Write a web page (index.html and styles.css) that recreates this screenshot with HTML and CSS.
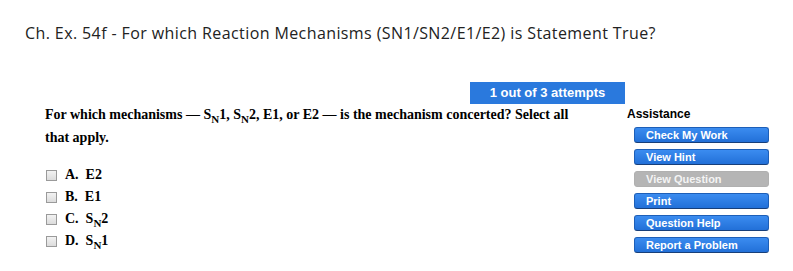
FILE: index.html
```html
<!DOCTYPE html>
<html>
<head>
<meta charset="utf-8">
<link rel="stylesheet" href="styles.css">
</head>
<body>
<h1 class="title">Ch. Ex. 54f - For which Reaction Mechanisms (SN1/SN2/E1/E2) is Statement True?</h1>
<div class="main">
  <div class="question">
    <div class="attempts-row"><span class="attempts">1 out of 3 attempts</span></div>
    <p class="prompt">For which mechanisms — S<sub>N</sub>1, S<sub>N</sub>2, E1, or E2 — is the mechanism concerted? Select all that apply.</p>
    <ul class="options">
      <li><span class="box"></span><span class="label">A.&nbsp; E2</span></li>
      <li><span class="box"></span><span class="label">B.&nbsp; E1</span></li>
      <li><span class="box"></span><span class="label">C.&nbsp; S<sub>N</sub>2</span></li>
      <li><span class="box"></span><span class="label">D.&nbsp; S<sub>N</sub>1</span></li>
    </ul>
  </div>
  <aside class="assist">
    <h2 class="assist-title">Assistance</h2>
    <div class="btn">Check My Work</div>
    <div class="btn">View Hint</div>
    <div class="btn disabled">View Question</div>
    <div class="btn">Print</div>
    <div class="btn">Question Help</div>
    <div class="btn">Report a Problem</div>
  </aside>
</div>
</body>
</html>
```
FILE: styles.css
```css
html, body {
  margin: 0;
  padding: 0;
  background: #fff;
}
body {
  width: 793px;
  height: 271px;
  overflow: hidden;
}
.title {
  margin: 0;
  padding: 24px 0 0 25px;
  font-family: "Open Sans", "Liberation Sans", sans-serif;
  font-weight: 400;
  font-size: 16px;
  line-height: 18px;
  letter-spacing: 0.4px;
  color: #222;
  height: 58px;
  box-sizing: border-box;
}
.main {
  display: flex;
  align-items: flex-start;
}
.question {
  width: 580px;
  padding-left: 45px;
}
.attempts-row {
  display: flex;
  justify-content: flex-end;
  margin-top: 24px;
}
.attempts {
  display: block;
  width: 155px;
  height: 22px;
  line-height: 22px;
  background: #2a79dd;
  color: #fff;
  font-family: "Liberation Sans", Arial, sans-serif;
  font-weight: 700;
  font-size: 13px;
  text-align: center;
}
.prompt {
  margin: -1px 0 0 0;
  width: 540px;
  font-family: "Liberation Serif", "Times New Roman", serif;
  font-weight: 700;
  font-size: 14px;
  line-height: 23px;
  color: #000;
}
sub {
  font-size: 11px;
  vertical-align: -4px;
  line-height: 0;
}
.options {
  list-style: none;
  margin: 15px 0 0 1px;
  padding: 0;
}
.options li {
  display: flex;
  align-items: center;
  height: 22px;
  font-family: "Liberation Serif", "Times New Roman", serif;
  font-weight: 700;
  font-size: 14px;
  color: #000;
}
.box {
  width: 9px;
  height: 9px;
  border: 1px solid #9a9a9a;
  background: linear-gradient(#f2f2f2, #dcdcdc);
  margin-right: 8px;
  flex: none;
}
.assist {
  margin-left: 2px;
  margin-top: 49px;
  width: 142px;
}
.assist-title {
  margin: 0 0 6px 0;
  font-family: "Liberation Sans", Arial, sans-serif;
  font-weight: 700;
  font-size: 12px;
  line-height: 14px;
  color: #000;
}
.btn {
  box-sizing: border-box;
  width: 135px;
  height: 16px;
  margin: 0 0 6px 7px;
  padding-left: 11px;
  border-radius: 3px;
  background: linear-gradient(#3b8cf0, #2270d8);
  border: 1px solid #1d5fb8;
  border-bottom-color: #173f7a;
  color: #fff;
  font-family: "Liberation Sans", Arial, sans-serif;
  font-weight: 700;
  font-size: 11px;
  line-height: 14px;
}
.btn.disabled {
  background: #b5b5b5;
  border-color: #b0b0b0;
  color: #f4f4f4;
}
```
